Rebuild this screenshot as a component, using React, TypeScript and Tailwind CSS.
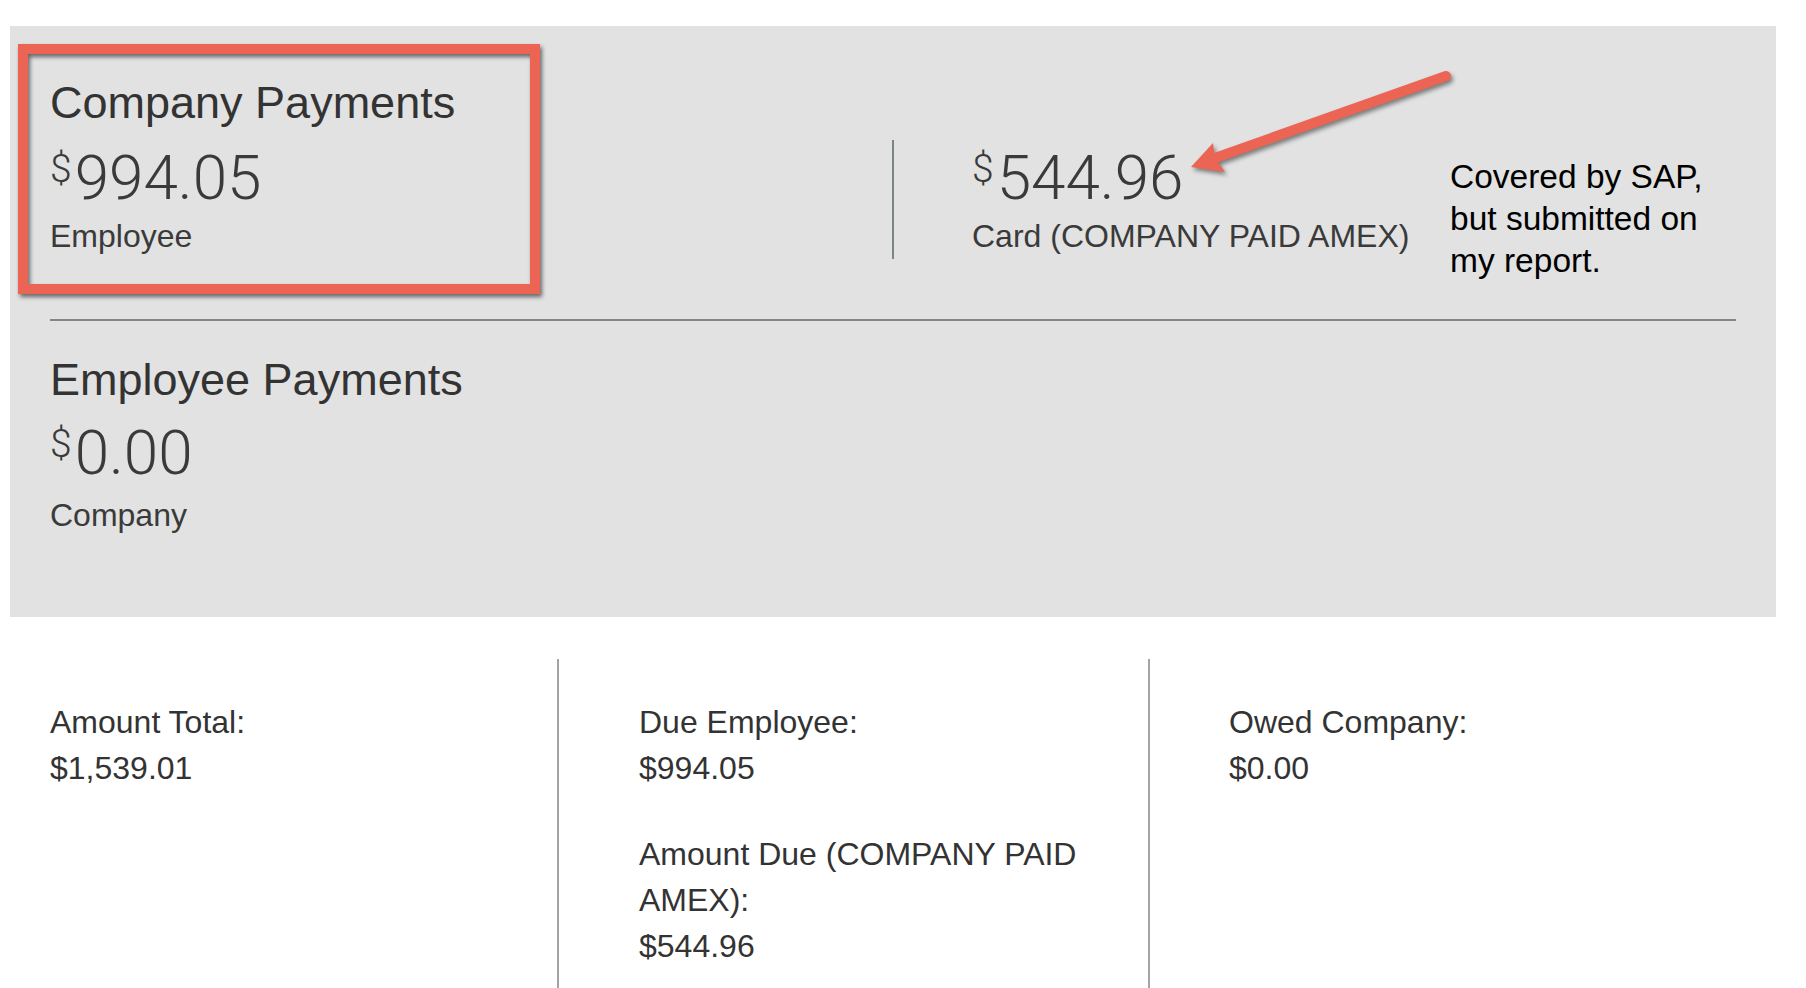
import React from 'react';

const Amount = ({ value }: { value: string }) => (
  <div className="flex items-start text-[#3a3a3a] font-['Roboto',sans-serif] font-light">
    <span className="text-[39px] leading-none mt-[4px]">$</span>
    <span className="text-[62px] leading-[64px] ml-[3px]">{value}</span>
  </div>
);

const Label = ({ children }: { children: React.ReactNode }) => (
  <div className="text-[32px] leading-[40px] text-[#3a3a3a]">{children}</div>
);

const SummaryColumn = ({ rows }: { rows: { label: string; value: string }[] }) => (
  <div className="flex flex-col gap-10">
    {rows.map((r) => (
      <div key={r.label}>
        <div>{r.label}</div>
        <div>{r.value}</div>
      </div>
    ))}
  </div>
);

export default function App() {
  return (
    <div className="relative min-h-screen bg-white font-['Liberation_Sans',Arial,sans-serif] text-[#333]">
      <div className="pt-[26px] pl-[10px] w-[1776px]">
        {/* payment totals panel */}
        <section className="h-[591px] bg-[#e1e2e1] px-10 pt-[51px]">
          <h2 className="text-[45px] leading-[52px] text-[#333]">Company Payments</h2>
          <div className="mt-[11px] flex">
            <div className="w-[842px] pt-[6px] pb-[3px]">
              <Amount value="994.05" />
              <div className="mt-[6px]">
                <Label>Employee</Label>
              </div>
            </div>
            <div className="border-l-2 border-[#7d8589] pl-[78px] pt-[6px] pb-[3px]">
              <Amount value="544.96" />
              <div className="mt-[6px]">
                <Label>Card (COMPANY PAID AMEX)</Label>
              </div>
            </div>
          </div>

          <div className="mt-[60px] h-[2px] bg-[#80878a]" />

          <h2 className="mt-[33px] text-[45px] leading-[52px] text-[#333]">Employee Payments</h2>
          <div className="mt-[15px]">
            <Amount value="0.00" />
            <div className="mt-[10px]">
              <Label>Company</Label>
            </div>
          </div>
        </section>

        {/* totals */}
        <div className="mt-[42px] flex pl-10 text-[32px] leading-[46px] text-[#333]">
          <div className="w-[507px] h-[330px] pt-10">
            <SummaryColumn rows={[{ label: 'Amount Total:', value: '$1,539.01' }]} />
          </div>
          <div className="w-[591px] h-[330px] border-l-2 border-[#a3a3a8] pl-20 pr-10 pt-10">
            <SummaryColumn
              rows={[
                { label: 'Due Employee:', value: '$994.05' },
                { label: 'Amount Due (COMPANY PAID AMEX):', value: '$544.96' },
              ]}
            />
          </div>
          <div className="h-[330px] border-l-2 border-[#a3a3a8] pl-[79px] pt-10">
            <SummaryColumn rows={[{ label: 'Owed Company:', value: '$0.00' }]} />
          </div>
        </div>
      </div>

      {/* annotation: highlight box */}
      <div className="absolute left-[18px] top-[44px] w-[522px] h-[250px] border-[10px] border-[#ec6453] drop-shadow-[2px_3px_2px_rgba(0,0,0,0.55)]" />

      {/* annotation: arrow */}
      <svg
        className="absolute left-[1170px] top-[55px] drop-shadow-[2px_3px_2px_rgba(0,0,0,0.45)]"
        width="300"
        height="140"
        viewBox="0 0 300 140"
      >
        <line x1="276" y1="21" x2="45" y2="103" stroke="#ec6453" strokeWidth="10" strokeLinecap="round" />
        <polygon points="21,112 43,88 45,103 55,117" fill="#ec6453" />
      </svg>

      {/* annotation: note */}
      <div className="absolute left-[1450px] top-[156px] text-[33.5px] leading-[42px] text-black">
        Covered by SAP,
        <br />
        but submitted on
        <br />
        my report.
      </div>
    </div>
  );
}
